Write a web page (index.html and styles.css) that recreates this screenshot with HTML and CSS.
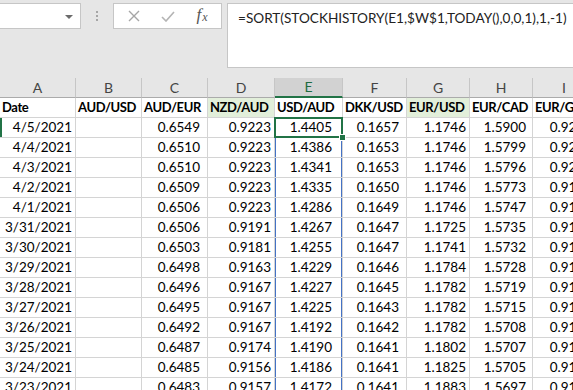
FILE: index.html
```html
<!DOCTYPE html>
<html lang="en">
<head>
    <meta charset="UTF-8">
    <title>STOCKHISTORY currency sheet</title>
    <link rel="stylesheet" href="styles.css">
</head>
<body>
    <div class="formula-row">
        <div class="name-box"><span class="name-arrow"></span></div>
        <div class="grip"><i></i><i></i><i></i></div>
        <div class="fx-box">
            <span class="fx-btn">
                <svg width="12" height="12" viewBox="0 0 12 12"><path d="M1 1L11 11M11 1L1 11" stroke="#a6a6a6" stroke-width="1.4" fill="none"/></svg>
            </span>
            <span class="fx-btn">
                <svg width="14" height="11" viewBox="0 0 14 11"><path d="M1 6L5 10L13 1" stroke="#b4b4b4" stroke-width="1.6" fill="none"/></svg>
            </span>
            <span class="fx-btn fx"><i>f</i><small>x</small></span>
        </div>
        <div class="formula">=SORT(STOCKHISTORY(E1,$W$1,TODAY(),0,0,1),1,-1)</div>
    </div>

    <div class="sheet">
        <div class="row col-heads">
            <div>A</div><div>B</div><div>C</div><div>D</div><div class="sel">E</div><div>F</div><div>G</div><div>H</div><div>I</div>
        </div>
        <div class="row titles">
            <div>Date</div><div>AUD/USD</div><div>AUD/EUR</div><div class="hl">NZD/AUD</div><div>USD/AUD</div><div>DKK/USD</div><div class="hl">EUR/USD</div><div>EUR/CAD</div><div>EUR/GBP</div>
        </div>
        <div class="row first">
            <div class="row-sel">4/5/2021</div><div></div><div>0.6549</div><div>0.9223</div><div class="active">1.4405</div><div>0.1657</div><div>1.1746</div><div>1.5900</div><div>0.9221</div>
        </div>
        <div class="row">
            <div>4/4/2021</div><div></div><div>0.6510</div><div>0.9223</div><div class="spill">1.4386</div><div>0.1653</div><div>1.1746</div><div>1.5799</div><div>0.9221</div>
        </div>
        <div class="row">
            <div>4/3/2021</div><div></div><div>0.6510</div><div>0.9223</div><div class="spill">1.4341</div><div>0.1653</div><div>1.1746</div><div>1.5796</div><div>0.9221</div>
        </div>
        <div class="row">
            <div>4/2/2021</div><div></div><div>0.6509</div><div>0.9223</div><div class="spill">1.4335</div><div>0.1650</div><div>1.1746</div><div>1.5773</div><div>0.9198</div>
        </div>
        <div class="row">
            <div>4/1/2021</div><div></div><div>0.6506</div><div>0.9223</div><div class="spill">1.4286</div><div>0.1649</div><div>1.1746</div><div>1.5747</div><div>0.9198</div>
        </div>
        <div class="row">
            <div>3/31/2021</div><div></div><div>0.6506</div><div>0.9191</div><div class="spill">1.4267</div><div>0.1647</div><div>1.1725</div><div>1.5735</div><div>0.9186</div>
        </div>
        <div class="row">
            <div>3/30/2021</div><div></div><div>0.6503</div><div>0.9181</div><div class="spill">1.4255</div><div>0.1647</div><div>1.1741</div><div>1.5732</div><div>0.9172</div>
        </div>
        <div class="row">
            <div>3/29/2021</div><div></div><div>0.6498</div><div>0.9163</div><div class="spill">1.4229</div><div>0.1646</div><div>1.1784</div><div>1.5728</div><div>0.9160</div>
        </div>
        <div class="row">
            <div>3/28/2021</div><div></div><div>0.6496</div><div>0.9167</div><div class="spill">1.4227</div><div>0.1645</div><div>1.1782</div><div>1.5719</div><div>0.9158</div>
        </div>
        <div class="row">
            <div>3/27/2021</div><div></div><div>0.6495</div><div>0.9167</div><div class="spill">1.4225</div><div>0.1643</div><div>1.1782</div><div>1.5715</div><div>0.9158</div>
        </div>
        <div class="row">
            <div>3/26/2021</div><div></div><div>0.6492</div><div>0.9167</div><div class="spill">1.4192</div><div>0.1642</div><div>1.1782</div><div>1.5708</div><div>0.9154</div>
        </div>
        <div class="row">
            <div>3/25/2021</div><div></div><div>0.6487</div><div>0.9174</div><div class="spill">1.4190</div><div>0.1641</div><div>1.1802</div><div>1.5707</div><div>0.9150</div>
        </div>
        <div class="row">
            <div>3/24/2021</div><div></div><div>0.6485</div><div>0.9156</div><div class="spill">1.4186</div><div>0.1641</div><div>1.1825</div><div>1.5705</div><div>0.9147</div>
        </div>
        <div class="row">
            <div>3/23/2021</div><div></div><div>0.6483</div><div>0.9157</div><div class="spill">1.4172</div><div>0.1641</div><div>1.1883</div><div>1.5697</div><div>0.9141</div>
        </div>
    </div>
</body>
</html>
```

FILE: styles.css
```css
body {
    margin: 0;
    width: 573px;
    height: 390px;
    overflow: hidden;
    background: #e6e6e6;
    font-family: 'Lato', 'Liberation Sans', sans-serif;
    color: #000;
}

/* formula bar */

.formula-row {
    display: flex;
    align-items: flex-start;
    padding-top: 3px;
    height: 65px;
}

.name-box {
    position: relative;
    box-sizing: border-box;
    width: 82px;
    height: 26px;
    margin-left: -1px;
    background: #fff;
    border: 1px solid #c6c6c6;
}

.name-arrow {
    position: absolute;
    right: 7px;
    top: 11px;
    border-left: 4px solid transparent;
    border-right: 4px solid transparent;
    border-top: 4px solid #6b6b6b;
}

.grip {
    display: flex;
    flex-direction: column;
    align-items: center;
    gap: 2px;
    width: 32px;
    padding-top: 8px;
}

.grip i {
    width: 2px;
    height: 2px;
    background: #a6a6a6;
}

.fx-box {
    box-sizing: border-box;
    display: flex;
    align-items: center;
    width: 109px;
    height: 26px;
    background: #fff;
    border: 1px solid #c6c6c6;
    padding-left: 3px;
}

.fx-btn {
    display: flex;
    align-items: center;
    justify-content: center;
    width: 34px;
}

.fx {
    font-family: 'Liberation Serif', serif;
    font-size: 17px;
    color: #555;
    padding-bottom: 2px;
}

.fx small {
    font-size: 12px;
    font-style: italic;
    margin-left: 1px;
    position: relative;
    top: 2px;
}

.formula {
    box-sizing: border-box;
    flex: 1;
    height: 65px;
    margin-left: 5px;
    padding: 6px 0 0 10px;
    background: #fff;
    border: 1px solid #c6c6c6;
    border-right: none;
    font-size: 13.6px;
    color: #222;
    white-space: nowrap;
}

/* sheet grid */

.sheet {
    margin-top: 10px;
    background: #fff;
}

.row {
    display: grid;
    grid-template-columns: 76px 66px 66px 67px 68px 64px 63px 63px 63px;
    height: 20px;
}

.row > div {
    box-sizing: border-box;
    height: 20px;
    line-height: 19px;
    border-right: 1px solid #d4d4d4;
    border-bottom: 1px solid #d4d4d4;
    font-size: 13.5px;
    text-align: right;
    white-space: nowrap;
    overflow: hidden;
    padding-right: 3px;
}

.row > div:nth-child(3) { padding-right: 7px; }
.row > div:nth-child(5) { padding-right: 10px; }
.row > div:nth-child(6) { padding-right: 7px; }
.row > div:nth-child(8) { padding-right: 6px; }

.row.col-heads > div {
    background: #e6e6e6;
    border-right-color: #c6c6c6;
    border-bottom-color: #ababab;
    color: #444;
    font-size: 14px;
    text-align: center;
    padding: 0;
}

.row.col-heads .sel {
    background: #d2d2d2;
    color: #1e6b40;
    border-bottom: 2px solid #217346;
    line-height: 18px;
}

.row.titles > div {
    font-size: 13px;
    font-weight: bold;
    letter-spacing: -0.4px;
    text-align: left;
    padding: 0 0 0 2px;
}

.titles .hl {
    background: #e2efda;
}

.row-sel {
    box-shadow: inset 2px 0 #217346;
}

.active {
    position: relative;
    overflow: visible !important;
}

.active::after {
    content: '';
    position: absolute;
    left: -1px;
    top: -1px;
    right: -1px;
    bottom: -1px;
    border: 2px solid #217346;
}

.active::before {
    content: '';
    position: absolute;
    right: -4px;
    bottom: -4px;
    width: 5px;
    height: 5px;
    background: #217346;
    border: 1px solid #fff;
    z-index: 1;
}

.spill {
    box-shadow: inset 1px 0 #4472c4, inset -1px 0 #4472c4;
}
```
